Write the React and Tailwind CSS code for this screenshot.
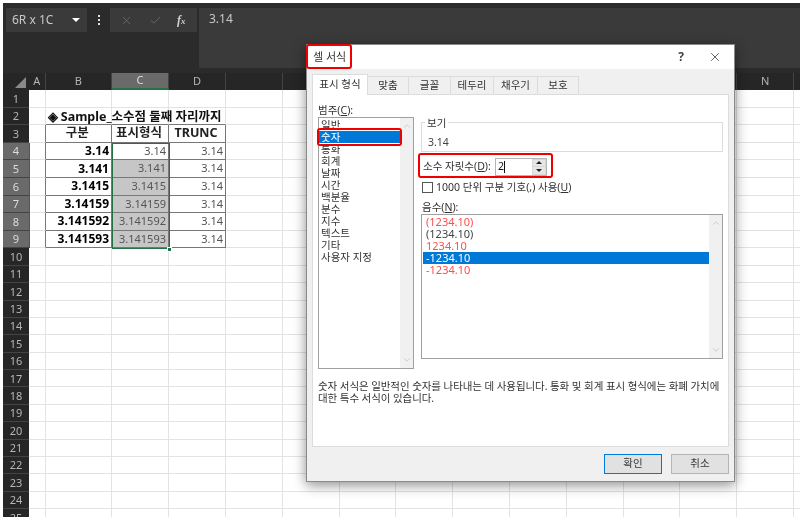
import { Check, ChevronDown, ChevronUp, X } from 'lucide-react';

const font = "font-['Noto_Sans','Noto_Sans_CJK_KR',sans-serif]";
const rowNumbers = Array.from({ length: 25 }, (_, i) => i + 1);
const wideColumns = ['E', 'F', 'G', 'H', 'I', 'J', 'K', 'L', 'M', 'N', 'O'];
const categories = ['일반', '숫자', '통화', '회계', '날짜', '시간', '백분율', '분수', '지수', '텍스트', '기타', '사용자 지정'];
const tabs = [
    ['표시 형식', 'w-[56px]'],
    ['맞춤', 'w-[41px]'],
    ['글꼴', 'w-[42px]'],
    ['테두리', 'w-[43px]'],
    ['채우기', 'w-[44px]'],
    ['보호', 'w-[41px]'],
];
const negatives = [
    ['(1234.10)', 'text-[#ff4d4d]'],
    ['(1234.10)', 'text-[#444]'],
    ['1234.10', 'text-[#ff4d4d]'],
    ['-1234.10', 'bg-[#0078d7] text-white'],
    ['-1234.10', 'text-[#ff4d4d]'],
];
const tableRows = {
    3: ['구분', '표시형식', 'TRUNC'],
    4: ['3.14', '3.14', '3.14'],
    5: ['3.141', '3.141', '3.14'],
    6: ['3.1415', '3.1415', '3.14'],
    7: ['3.14159', '3.14159', '3.14'],
    8: ['3.141592', '3.141592', '3.14'],
    9: ['3.141593', '3.141593', '3.14'],
};

function ColumnHeader({ label, className, selected }) {
    return (
        <div
            className={`flex h-full shrink-0 items-center justify-center border-r border-[#444] text-[11px] ${className} ${
                selected
                    ? 'border-b-2 border-b-[#217346] bg-[#6a6a6a] text-[#ddd]'
                    : 'text-[#b5b5b5]'
            }`}
        >
            {label}
        </div>
    );
}

function TableCell({ row, col, width }) {
    const value = tableRows[row][col];
    const isHeader = row === 3;
    const shaded = col === 1 && row > 4;
    return (
        <div
            className={`flex h-full shrink-0 items-center overflow-hidden whitespace-nowrap border-r border-b border-[#777] pr-[2px] ${width} ${
                isHeader
                    ? 'justify-center text-[12.5px] font-bold text-[#222]'
                    : 'justify-end'
            } ${!isHeader && col === 0 ? 'text-[12px] font-bold text-black' : ''} ${
                !isHeader && col > 0 ? 'text-[11px] text-[#555]' : ''
            } ${shaded ? 'bg-[#c6c6c6]' : ''}`}
        >
            {value}
        </div>
    );
}

function SheetRow({ row }) {
    const inTable = row >= 3 && row <= 9;
    const selected = row >= 4 && row <= 9;
    return (
        <div className={`flex ${row <= 9 ? 'h-[17.6px]' : 'h-[17.4px]'}`}>
            <div
                className={`flex h-full w-[26px] shrink-0 items-center justify-center border-b border-[#444] pt-[1px] text-[11px] ${
                    selected
                        ? 'bg-[#6a6a6a] text-[#ddd]'
                        : 'bg-[#262626] text-[#b5b5b5]'
                }`}
            >
                {row}
            </div>
            <div
                className={`h-full w-[16.5px] shrink-0 border-r border-b border-b-[#e3e3e3] ${
                    inTable ? 'border-r-[#777]' : 'border-r-[#e3e3e3]'
                }`}
            />
            {inTable ? (
                <>
                    <TableCell row={row} col={0} width="w-[66.5px]" />
                    <TableCell row={row} col={1} width="w-[57px]" />
                    <TableCell row={row} col={2} width="w-[57px]" />
                </>
            ) : (
                <>
                    <div
                        className={`h-full w-[66.5px] shrink-0 whitespace-nowrap border-r border-r-[#e3e3e3] border-b text-[12.5px] leading-[17px] font-bold text-[#111] ${
                            row === 2 ? 'border-b-[#777]' : 'border-b-[#e3e3e3]'
                        }`}
                    >
                        {row === 2 ? (
                            <span className="relative z-10 pl-[2px]">
                                ◈ Sample_소수점 둘째 자리까지
                            </span>
                        ) : null}
                    </div>
                    <div
                        className={`h-full w-[57px] shrink-0 border-r border-r-[#e3e3e3] border-b ${
                            row === 2 ? 'border-b-[#777]' : 'border-b-[#e3e3e3]'
                        }`}
                    />
                    <div
                        className={`h-full w-[57px] shrink-0 border-r border-r-[#e3e3e3] border-b ${
                            row === 2 ? 'border-b-[#777]' : 'border-b-[#e3e3e3]'
                        }`}
                    />
                </>
            )}
            {wideColumns.map(column => (
                <div
                    key={column}
                    className="h-full w-[56.8px] shrink-0 border-r border-b border-[#e3e3e3]"
                />
            ))}
        </div>
    );
}

function Toolbar() {
    return (
        <div className="flex h-[70px] bg-[#2b2b2b] pt-[5px]">
            <div className="ml-[3px] flex h-[24px] w-[81px] items-center justify-between bg-[#3a3a3a] px-[6px] text-[12px] text-[#c8c8c8]">
                <span>6R x 1C</span>
                <span className="mr-[1px] h-0 w-0 border-x-[4px] border-t-[4px] border-x-transparent border-t-white" />
            </div>
            <div className="flex h-[24px] w-[23px] flex-col items-center justify-center gap-[2px]">
                <span className="h-[2px] w-[2px] bg-[#ddd]" />
                <span className="h-[2px] w-[2px] bg-[#ddd]" />
                <span className="h-[2px] w-[2px] bg-[#ddd]" />
            </div>
            <div className="flex h-[24px] w-[87px] items-center bg-[#3a3a3a] pl-[10px] text-[#6e6e6e]">
                <X size={13} strokeWidth={1.5} />
                <Check size={13} strokeWidth={1.5} className="ml-[16px]" />
                <span className="ml-[15px] font-['Liberation_Serif',serif] text-[12px] font-bold text-[#d0d0d0] italic">
                    f<span className="text-[9px]">x</span>
                </span>
            </div>
            <div className="ml-[2px] h-[60px] flex-1 bg-[#3a3a3a] pt-[2px] pl-[10px] text-[12px] text-[#c8c8c8]">
                3.14
            </div>
        </div>
    );
}

function ScrollTrack() {
    return (
        <div className="flex w-[13px] shrink-0 flex-col items-center justify-between bg-[#f0f0f0] py-[3px] text-[#c4c4c4]">
            <ChevronUp size={10} strokeWidth={2} />
            <ChevronDown size={10} strokeWidth={2} />
        </div>
    );
}

function FormatDialog() {
    return (
        <div className="absolute top-[44px] left-[306px] flex h-[438px] w-[429px] flex-col border border-[#8a8a8a] bg-[#f0f0f0] text-[10.5px] text-[#333] shadow-[0_3px_12px_rgba(0,0,0,0.45)]">
            <div className="flex h-[24px] shrink-0 items-center justify-between bg-white pr-[12px] pl-[6px] text-[11px]">
                <span>셀 서식</span>
                <div className="flex items-center gap-[24px]">
                    <span className="text-[12px] font-bold text-[#444]">?</span>
                    <X size={14} strokeWidth={1.2} className="text-[#222]" />
                </div>
            </div>
            <div className="mt-[7px] flex h-[18px] shrink-0 pl-[5px]">
                {tabs.map(([label, width], index) => (
                    <div
                        key={label}
                        className={`flex shrink-0 items-center justify-center border-t border-r border-[#dcdcdc] ${width} ${
                            index === 0
                                ? 'relative z-10 -mt-[2px] h-[21px] border-l bg-white'
                                : 'h-[18px]'
                        }`}
                    >
                        {label}
                    </div>
                ))}
            </div>
            <div className="mx-[5px] flex h-[353px] shrink-0 flex-col border border-[#dcdcdc] bg-white px-[5px] pt-[8px]">
                <div className="flex">
                    <div className="flex w-[96px] shrink-0 flex-col">
                        <div className="h-[14px] leading-[14px]">
                            범주(<span className="underline">C</span>):
                        </div>
                        <div className="flex h-[252px] border border-[#a0a0a0]">
                            <div className="w-[81px] pt-[1px]">
                                {categories.map(category => (
                                    <div
                                        key={category}
                                        className={`h-[12px] overflow-visible pl-[2px] leading-[12px] ${
                                            category === '숫자'
                                                ? 'bg-[#0078d7] text-white'
                                                : ''
                                        }`}
                                    >
                                        {category}
                                    </div>
                                ))}
                            </div>
                            <ScrollTrack />
                        </div>
                    </div>
                    <div className="ml-[7px] flex flex-1 flex-col">
                        <div className="relative mt-[19px] h-[30px] border border-[#dcdcdc] pt-[12px] pl-[6px] leading-[14px] text-[#444]">
                            <span className="absolute -top-[7px] left-[3px] bg-white px-[2px] leading-[14px] text-[#333]">
                                보기
                            </span>
                            3.14
                        </div>
                        <div className="mt-[5px] flex h-[19px] items-center">
                            <span className="ml-[2px] w-[72px]">
                                소수 자릿수(<span className="underline">D</span>):
                            </span>
                            <div className="flex h-[18px] w-[52px] border border-[#b5b5b5]">
                                <span className="flex flex-1 items-center pl-[2px] text-[#111]">
                                    2
                                    <span className="h-[12px] w-px bg-[#111]" />
                                </span>
                                <div className="flex w-[14px] flex-col gap-[1px] bg-[#d8d8d8] p-[1px]">
                                    <span className="flex flex-1 items-center justify-center bg-[#e6e6e6]">
                                        <span className="h-0 w-0 border-x-[3px] border-b-[3px] border-x-transparent border-b-[#222]" />
                                    </span>
                                    <span className="flex flex-1 items-center justify-center bg-[#e6e6e6]">
                                        <span className="h-0 w-0 border-x-[3px] border-t-[3px] border-x-transparent border-t-[#222]" />
                                    </span>
                                </div>
                            </div>
                        </div>
                        <div className="mt-[5px] flex h-[13px] items-center">
                            <span className="ml-[1px] h-[11px] w-[11px] border border-[#555] bg-white" />
                            <span className="ml-[3px]">
                                1000 단위 구분 기호(,) 사용(<span className="underline">U</span>)
                            </span>
                        </div>
                        <div className="mt-[6px] ml-[1px] h-[14px] leading-[14px]">
                            음수(<span className="underline">N</span>):
                        </div>
                        <div className="flex h-[145px] border border-[#a0a0a0] text-[11px]">
                            <div className="flex-1 pt-[1px] pl-[1px]">
                                {negatives.map(([label, color], index) => (
                                    <div
                                        key={index}
                                        className={`h-[12px] pl-[3px] leading-[12px] ${color}`}
                                    >
                                        {label}
                                    </div>
                                ))}
                            </div>
                            <ScrollTrack />
                        </div>
                    </div>
                </div>
                <p className="mt-[11px] text-[10.5px] leading-[12px] tracking-[-0.08px] whitespace-nowrap">
                    숫자 서식은 일반적인 숫자를 나타내는 데 사용됩니다. 통화 및 회계 표시 형식에는 화폐 가치에
                    <br />
                    대한 특수 서식이 있습니다.
                </p>
            </div>
            <div className="mt-[7px] flex justify-end gap-[9px] pr-[5px]">
                <button
                    type="button"
                    className="h-[20px] w-[58px] cursor-pointer border border-[#0078d7] bg-[#e1e1e1] text-[10.5px] text-[#333]"
                >
                    확인
                </button>
                <button
                    type="button"
                    className="h-[20px] w-[58px] cursor-pointer border border-[#b5b5b5] bg-[#e1e1e1] text-[10.5px] text-[#333]"
                >
                    취소
                </button>
            </div>
        </div>
    );
}

function RedBox({ className }) {
    return (
        <div
            className={`pointer-events-none absolute z-20 rounded-[3px] border-2 border-[#ee0000] ${className}`}
        />
    );
}

export default function App() {
    return (
        <div
            className={`relative h-[520px] w-[800px] overflow-hidden bg-white pt-[3px] pl-[3px] blur-[0.3px] ${font}`}
        >
            <Toolbar />
            <div className="flex h-[17px] bg-[#262626]">
                <div className="relative h-full w-[26px] shrink-0">
                    <span className="absolute right-[3px] bottom-[2px] h-0 w-0 border-b-[11px] border-l-[11px] border-b-[#8a8a8a] border-l-transparent" />
                </div>
                <ColumnHeader label="A" className="w-[16.5px]" />
                <ColumnHeader label="B" className="w-[66.5px]" />
                <ColumnHeader label="C" className="w-[57px]" selected />
                <ColumnHeader label="D" className="w-[57px]" />
                {wideColumns.map(column => (
                    <ColumnHeader
                        key={column}
                        label={column === 'N' ? 'N' : ''}
                        className="w-[56.8px]"
                    />
                ))}
            </div>
            <div className="h-[427px] overflow-hidden">
                {rowNumbers.map(row => (
                    <SheetRow key={row} row={row} />
                ))}
            </div>

            <div className="absolute top-[143px] left-[112px] z-10 h-[106px] w-[58px] border-[1.5px] border-[#217346]" />
            <div className="absolute top-[247px] left-[167px] z-10 h-[5px] w-[5px] border border-white bg-[#217346]" />
            <div className="absolute top-[143px] left-[29px] h-[105px] w-px bg-[#217346]" />

            <FormatDialog />

            <RedBox className="top-[44px] left-[306px] h-[25px] w-[46px]" />
            <RedBox className="top-[128px] left-[317px] h-[18px] w-[85px]" />
            <RedBox className="top-[153px] left-[418px] h-[25px] w-[135px]" />
        </div>
    );
}
